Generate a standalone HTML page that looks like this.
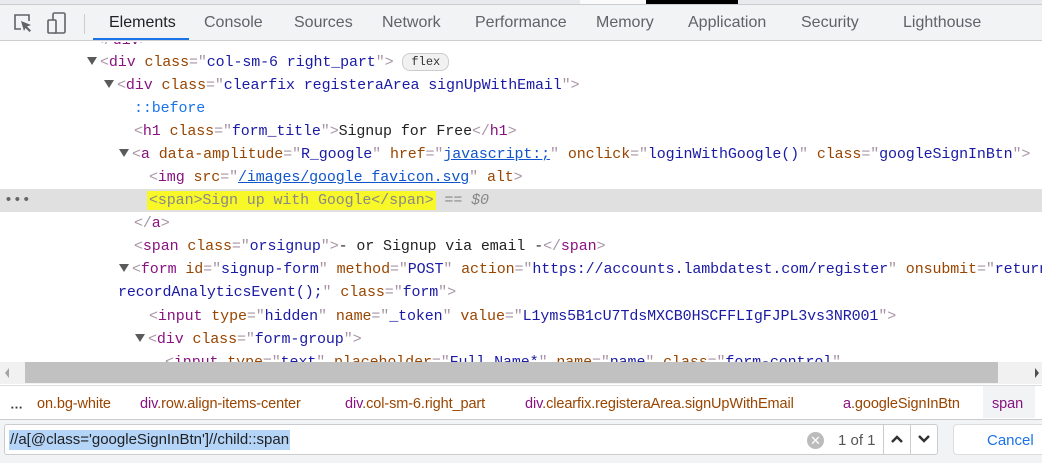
<!DOCTYPE html>
<html><head><meta charset="utf-8"><style>
*{margin:0;padding:0;box-sizing:border-box}
body{width:1042px;height:463px;overflow:hidden;background:#fff;position:relative;font-family:"Liberation Sans",sans-serif}
.abs{position:absolute}
.tb{top:4px;left:0;width:1042px;height:37px;background:#f1f3f4;border-top:1px solid #cbcdd1;border-bottom:1px solid #cbcdd1}
.tab{position:absolute;top:14px;font-size:16px;color:#5f6368}
.code{position:absolute;top:42px;left:0;width:1042px;height:320px;overflow:hidden}
.ln{position:absolute;left:0;height:23px;line-height:23px;font-family:"Liberation Mono",monospace;font-size:15px;letter-spacing:-0.11px;white-space:pre;color:#222}
.t{color:#881280}.a{color:#994500}.v{color:#1a1aa6}.b{color:#a894a6}.u{text-decoration:underline;color:#1155cc}
.tri{display:inline-block;width:0;height:0;border-left:5px solid transparent;border-right:5px solid transparent;border-top:8px solid #5a5a5a;margin-right:3px;vertical-align:1px}
.bc{position:absolute;top:404px;font-size:14.5px;transform:translateY(-50%);letter-spacing:-0.1px}
</style></head><body>
<div class="abs" style="top:0;left:0;width:1042px;height:4px;background:#e8eaed"></div>
<div class="abs" style="top:0;left:580px;width:66px;height:4px;background:#fafafa"></div>
<div class="abs" style="top:0;left:646px;width:92px;height:4px;background:#000"></div>
<div class="abs tb"></div>
<svg class="abs" style="left:12px;top:12px" width="22" height="22" viewBox="0 0 22 22"><path d="M9 17H3V3h14v6" fill="none" stroke="#5f6368" stroke-width="1.6"/><path d="M9 9l10 4-4 1.5 4 4-1.5 1.5-4-4L12 19z" fill="#5f6368"/></svg>
<svg class="abs" style="left:46px;top:12px" width="22" height="24" viewBox="0 0 22 24"><rect x="7" y="1" width="12" height="20" rx="1.5" fill="none" stroke="#5f6368" stroke-width="1.6"/><rect x="2" y="8" width="8" height="13" rx="1" fill="#f1f3f4" stroke="#5f6368" stroke-width="1.6"/></svg>
<div class="abs" style="left:84px;top:14px;width:1px;height:20px;background:#ccc"></div>
<div class="tab" style="left:109px;color:#202124">Elements</div>
<div class="abs" style="left:93px;top:38px;width:96px;height:2px;background:#1a73e8"></div>
<div class="tab" style="left:204px">Console</div>
<div class="tab" style="left:294px">Sources</div>
<div class="tab" style="left:382px">Network</div>
<div class="tab" style="left:475px">Performance</div>
<div class="tab" style="left:596px">Memory</div>
<div class="tab" style="left:688px">Application</div>
<div class="tab" style="left:801px">Security</div>
<div class="tab" style="left:903px">Lighthouse</div>

<div class="code">
<div class="abs" style="left:0;top:147px;width:1042px;height:23px;background:#e0e0e0"></div>
<div class="ln" style="top:-13px;left:95px"><span class="b">&lt;/</span><span class="t">div</span><span class="b">&gt;</span></div>
<div class="ln" style="top:9px;left:87px"><span class="tri"></span><span class="b">&lt;</span><span class="t">div</span> <span class="a">class</span><span class="b">="</span><span class="v">col-sm-6 right_part</span><span class="b">"&gt;</span> <span style="display:inline-block;font-size:12px;line-height:16px;padding:0 8px;border:1px solid #ccc;border-radius:8px;background:#f1f1f1;color:#333;vertical-align:1px;letter-spacing:0">flex</span></div>
<div class="ln" style="top:32px;left:104px"><span class="tri"></span><span class="b">&lt;</span><span class="t">div</span> <span class="a">class</span><span class="b">="</span><span class="v">clearfix registeraArea signUpWithEmail</span><span class="b">"&gt;</span></div>
<div class="ln" style="top:55px;left:134px;color:#1a73e8">::before</div>
<div class="ln" style="top:78px;left:134px"><span class="b">&lt;</span><span class="t">h1</span> <span class="a">class</span><span class="b">="</span><span class="v">form_title</span><span class="b">"&gt;</span>Signup for Free<span class="b">&lt;/</span><span class="t">h1</span><span class="b">&gt;</span></div>
<div class="ln" style="top:101px;left:119px"><span class="tri"></span><span class="b">&lt;</span><span class="t">a</span> <span class="a">data-amplitude</span><span class="b">="</span><span class="v">R_google</span><span class="b">"</span> <span class="a">href</span><span class="b">="</span><span class="u">javascript:;</span><span class="b">"</span> <span class="a">onclick</span><span class="b">="</span><span class="v">loginWithGoogle()</span><span class="b">"</span> <span class="a">class</span><span class="b">="</span><span class="v">googleSignInBtn</span><span class="b">"&gt;</span></div>
<div class="ln" style="top:124px;left:149px"><span class="b">&lt;</span><span class="t">img</span> <span class="a">src</span><span class="b">="</span><span class="u">/images/google_favicon.svg</span><span class="b">"</span> <span class="a">alt</span><span class="b">&gt;</span></div>
<div class="ln" style="top:147px;left:4px;color:#666">•••</div>
<div class="ln" style="top:147px;left:147px;color:#888"><span style="background:#f8f828;padding:1px 2px">&lt;span&gt;Sign up with Google&lt;/span&gt;</span> == <i>$0</i></div>
<div class="ln" style="top:170px;left:134px"><span class="b">&lt;/</span><span class="t">a</span><span class="b">&gt;</span></div>
<div class="ln" style="top:193px;left:134px"><span class="b">&lt;</span><span class="t">span</span> <span class="a">class</span><span class="b">="</span><span class="v">orsignup</span><span class="b">"&gt;</span>- or Signup via email -<span class="b">&lt;/</span><span class="t">span</span><span class="b">&gt;</span></div>
<div class="ln" style="top:216px;left:119px"><span class="tri"></span><span class="b">&lt;</span><span class="t">form</span> <span class="a">id</span><span class="b">="</span><span class="v">signup-form</span><span class="b">"</span> <span class="a">method</span><span class="b">="</span><span class="v">POST</span><span class="b">"</span> <span class="a">action</span><span class="b">="</span><span class="v">https://accounts.lambdatest.com/register</span><span class="b">"</span> <span class="a">onsubmit</span><span class="b">="</span><span class="v">return</span></div>
<div class="ln" style="top:239px;left:118px"><span class="v">recordAnalyticsEvent();</span><span class="b">"</span> <span class="a">class</span><span class="b">="</span><span class="v">form</span><span class="b">"&gt;</span></div>
<div class="ln" style="top:263px;left:149px"><span class="b">&lt;</span><span class="t">input</span> <span class="a">type</span><span class="b">="</span><span class="v">hidden</span><span class="b">"</span> <span class="a">name</span><span class="b">="</span><span class="v">_token</span><span class="b">"</span> <span class="a">value</span><span class="b">="</span><span class="v">L1yms5B1cU7TdsMXCB0HSCFFLIgFJPL3vs3NR001</span><span class="b">"&gt;</span></div>
<div class="ln" style="top:286px;left:135px"><span class="tri"></span><span class="b">&lt;</span><span class="t">div</span> <span class="a">class</span><span class="b">="</span><span class="v">form-group</span><span class="b">"&gt;</span></div>
<div class="ln" style="top:309px;left:165px"><span class="b">&lt;</span><span class="t">input</span> <span class="a">type</span><span class="b">="</span><span class="v">text</span><span class="b">"</span> <span class="a">placeholder</span><span class="b">="</span><span class="v">Full Name*</span><span class="b">"</span> <span class="a">name</span><span class="b">="</span><span class="v">name</span><span class="b">"</span> <span class="a">class</span><span class="b">="</span><span class="v">form-control</span><span class="b">"</span></div>
</div>

<div class="abs" style="top:362px;left:0;width:1042px;height:22px;background:#f1f1f1"></div>
<div class="abs" style="top:362px;left:25px;width:973px;height:21px;background:#c1c1c1"></div>
<div class="abs" style="top:368px;left:5px;width:0;height:0;border-top:5px solid transparent;border-bottom:5px solid transparent;border-right:4px solid #a3a3a3"></div>
<div class="abs" style="top:368px;left:1035px;width:0;height:0;border-top:5px solid transparent;border-bottom:5px solid transparent;border-left:4px solid #505050"></div>
<div class="abs" style="top:385px;left:0;width:1042px;height:34px;background:#fff;border-top:1px solid #ddd"></div>
<div class="abs" style="top:386px;left:983px;width:52px;height:32px;background:#f1f3f4"></div>
<div class="bc" style="left:10px;color:#333;font-size:13px;font-weight:bold">…</div>
<div class="bc" style="left:37px;color:#994500">on.bg-white</div>
<div class="bc" style="left:140px"><span style="color:#881280">div</span><span style="color:#994500">.row.align-items-center</span></div>
<div class="bc" style="left:345px"><span style="color:#881280">div</span><span style="color:#994500">.col-sm-6.right_part</span></div>
<div class="bc" style="left:525px"><span style="color:#881280">div</span><span style="color:#994500">.clearfix.registeraArea.signUpWithEmail</span></div>
<div class="bc" style="left:843px"><span style="color:#881280">a</span><span style="color:#994500">.googleSignInBtn</span></div>
<div class="bc" style="left:992px;color:#881280">span</div>
<div class="abs" style="top:419px;left:0;width:1042px;height:44px;background:#f1f3f4;border-top:1px solid #ccc"></div>
<div class="abs" style="top:424px;left:4px;width:934px;height:31px;background:#fff;border:1px solid #ccc;border-radius:3px"></div>
<div class="abs" style="top:430px;left:9px;height:20px;line-height:20px;padding:0 1px;background:#b4d4f8;font-size:15px;color:#222">//a[@class='googleSignInBtn']//child::span</div>
<div class="abs" style="top:432px;left:807px;width:17px;height:17px;border-radius:50%;background:#bbb;color:#fff;font-size:13px;line-height:17px;text-align:center">✕</div>
<div class="abs" style="top:432px;left:838px;font-size:15px;color:#555">1 of 1</div>
<div class="abs" style="top:425px;left:883px;width:1px;height:30px;background:#ccc"></div>
<div class="abs" style="top:425px;left:910px;width:1px;height:30px;background:#ccc"></div>
<svg class="abs" style="left:890px;top:434px" width="14" height="10"><path d="M2 8l5-5 5 5" fill="none" stroke="#333" stroke-width="2.5"/></svg>
<svg class="abs" style="left:917px;top:434px" width="14" height="10"><path d="M2 2l5 5 5-5" fill="none" stroke="#333" stroke-width="2.5"/></svg>
<div class="abs" style="top:424px;left:953px;width:95px;height:31px;background:#fff;border:1px solid #ddd;border-radius:4px"></div>
<div class="abs" style="top:432px;left:987px;font-size:15px;color:#1a73e8">Cancel</div>
</body></html>
